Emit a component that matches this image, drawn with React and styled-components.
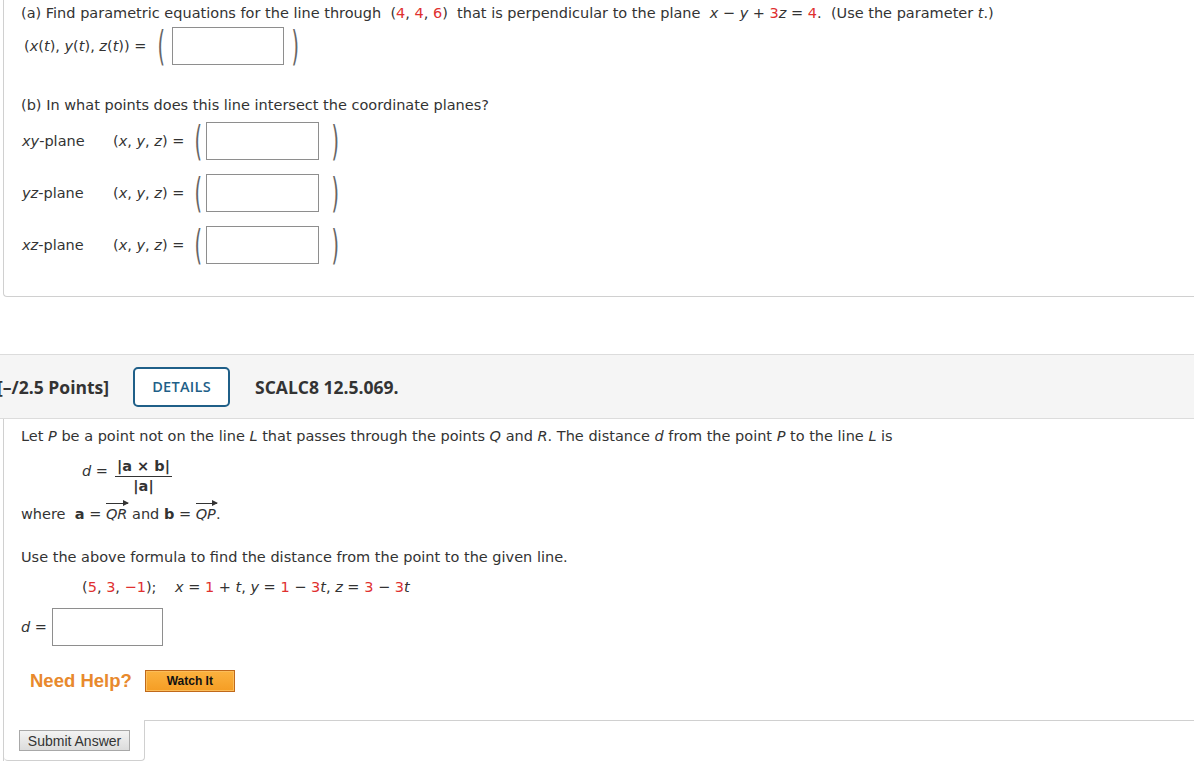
import React from 'react';
import styled, { createGlobalStyle } from 'styled-components';

const GlobalStyle = createGlobalStyle`
  body {
    margin: 0;
    background: #fff;
    font-family: "DejaVu Sans", Verdana, sans-serif;
    color: #333;
  }
`;

const Page = styled.div`
  width: 1194px;
  height: 767px;
  overflow: hidden;
  background: #fff;
`;

const QuestionPanel = styled.div`
  margin-left: 3px;
  border-left: 1px solid #d0d0d0;
  border-bottom: 1px solid #d0d0d0;
  border-bottom-left-radius: 4px;
  padding: 5px 0 32px 17px;
  font-size: 14.5px;
`;

const Text = styled.div`
  line-height: 16px;
  margin-top: ${(p) => p.$mt || 0}px;
  padding-left: ${(p) => p.$pl || 0}px;
  white-space: nowrap;
`;

const Red = styled.span`
  color: #e0302f;
`;

const Var = styled.i`
  font-style: italic;
`;

const Bold = styled.b`
  font-weight: bold;
`;

const AnswerRow = styled.div`
  display: flex;
  align-items: center;
  height: 38px;
  margin-top: ${(p) => p.$mt || 0}px;
  padding-left: ${(p) => p.$pl || 0}px;
`;

const PlaneLabel = styled.span`
  width: 91px;
`;

const Paren = styled.span`
  display: inline-block;
  width: 13px;
  text-align: center;
  font-size: 40px;
  line-height: 38px;
  color: #666;
  font-weight: normal;
  transform: scaleX(0.48);
  margin: 0 ${(p) => p.$mr || 0}px 0 ${(p) => p.$ml || 0}px;
`;

const AnswerBox = styled.div`
  box-sizing: border-box;
  width: ${(p) => p.$w || 112}px;
  height: ${(p) => p.$h || 38}px;
  border: 1px solid #8e8e8e;
  background: #fff;
`;

const Gap = styled.span`
  display: inline-block;
  width: ${(p) => p.$w}px;
`;

const Header = styled.div`
  margin-top: 57px;
  height: 65px;
  box-sizing: border-box;
  background: #f5f5f5;
  border-top: 1px solid #dcdcdc;
  border-bottom: 1px solid #dcdcdc;
  display: flex;
  align-items: center;
  font-family: "Open Sans", sans-serif;
  color: #333;
`;

const Points = styled.span`
  font-size: 17.5px;
  font-weight: 700;
  margin-left: -3px;
`;

const DetailsButton = styled.button`
  margin-left: 24px;
  width: 97px;
  height: 40px;
  box-sizing: border-box;
  border: 2px solid #1f5f88;
  border-radius: 5px;
  background: #fff;
  color: #1f5f88;
  font-family: "Open Sans", sans-serif;
  font-size: 14.5px;
  font-weight: 600;
  letter-spacing: 0.3px;
`;

const Code = styled.span`
  margin-left: 25px;
  font-size: 17.5px;
  font-weight: 700;
`;

const Body = styled.div`
  margin-left: 3px;
  border-left: 1px solid #d0d0d0;
  font-size: 14.5px;
`;

const Content = styled.div`
  padding: 9px 0 29px 17px;
`;

const Formula = styled.div`
  display: flex;
  align-items: flex-start;
  padding-left: 61px;
  margin-top: 14px;
  height: 38px;
`;

const FormulaLhs = styled.span`
  line-height: 16px;
  padding-top: 5px;
`;

const Fraction = styled.span`
  display: inline-flex;
  flex-direction: column;
  align-items: center;
  margin-left: 7px;
  font-weight: bold;
`;

const Numer = styled.span`
  padding: 0 2px 2px;
  border-bottom: 1px solid #333;
  line-height: 16px;
`;

const Denom = styled.span`
  line-height: 18px;
`;

const Vec = styled.span`
  position: relative;
  display: inline-block;
  font-style: italic;
  &::before {
    content: '';
    position: absolute;
    left: 0;
    right: -1px;
    top: -3px;
    border-top: 1px solid #333;
  }
  &::after {
    content: '';
    position: absolute;
    right: -2px;
    top: -6px;
    border-left: 6px solid #333;
    border-top: 3px solid transparent;
    border-bottom: 3px solid transparent;
  }
`;

const HelpRow = styled.div`
  display: flex;
  align-items: center;
  margin-top: 24px;
  padding-left: 9px;
  gap: 13px;
`;

const NeedHelp = styled.span`
  font-family: "Liberation Sans", Arial, sans-serif;
  font-weight: bold;
  font-size: 18.5px;
  color: #e8892d;
`;

const WatchButton = styled.button`
  width: 90px;
  height: 22px;
  box-sizing: border-box;
  padding: 0;
  border: 1px solid #c0691a;
  box-shadow: inset 0 0 0 1px #fbbd5a;
  background: linear-gradient(#fbb23f, #f59d24);
  font-family: "Liberation Sans", Arial, sans-serif;
  font-weight: bold;
  font-size: 12px;
  color: #111;
`;

const Footer = styled.div`
  display: flex;
  height: 40px;
`;

const SubmitTab = styled.div`
  width: 141px;
  box-sizing: border-box;
  border-bottom: 1px solid #d0d0d0;
  border-right: 1px solid #d0d0d0;
  border-bottom-left-radius: 4px;
  border-bottom-right-radius: 4px;
  padding: 9px 0 0 15px;
`;

const FooterRest = styled.div`
  flex: 1;
  border-top: 1px solid #d0d0d0;
  border-left: 1px solid #d0d0d0;
  border-top-left-radius: 4px;
  margin: -1px 0 0 -1px;
  height: 0;
`;

const SubmitButton = styled.button`
  width: 111px;
  height: 21px;
  box-sizing: border-box;
  padding: 0;
  border: 1px solid #a8a8a8;
  background: linear-gradient(#f3f3f3, #dcdcdc);
  font-family: "Liberation Sans", Arial, sans-serif;
  font-size: 14px;
  color: #333;
`;

const planes = ['xy', 'yz', 'xz'];

export default function App() {
  return (
    <Page>
      <GlobalStyle />
      <QuestionPanel>
        <Text>
          (a) Find parametric equations for the line through&nbsp; (<Red>4</Red>, <Red>4</Red>, <Red>6</Red>)&nbsp; that is perpendicular to the plane&nbsp; <Var>x</Var> − <Var>y</Var> + <Red>3</Red><Var>z</Var> = <Red>4</Red>.&nbsp; (Use the parameter <Var>t</Var>.)
        </Text>
        <AnswerRow $mt={6} $pl={3}>
          <span>(<Var>x</Var>(<Var>t</Var>), <Var>y</Var>(<Var>t</Var>), <Var>z</Var>(<Var>t</Var>)) =</span>
          <Paren $ml={8} $mr={5}>(</Paren>
          <AnswerBox $w={112} />
          <Paren $ml={4}>)</Paren>
        </AnswerRow>
        <Text $mt={32}>(b) In what points does this line intersect the coordinate planes?</Text>
        {planes.map((pl, i) => (
          <AnswerRow key={pl} $mt={i === 0 ? 9 : 14} $pl={1}>
            <PlaneLabel><Var>{pl}</Var>-plane</PlaneLabel>
            <span>(<Var>x</Var>, <Var>y</Var>, <Var>z</Var>) =</span>
            <Paren $ml={7} $mr={2}>(</Paren>
            <AnswerBox $w={113} />
            <Paren $ml={9}>)</Paren>
          </AnswerRow>
        ))}
      </QuestionPanel>

      <Header>
        <Points>[–/2.5 Points]</Points>
        <DetailsButton>DETAILS</DetailsButton>
        <Code>SCALC8 12.5.069.</Code>
      </Header>

      <Body>
        <Content>
          <Text>
            Let <Var>P</Var> be a point not on the line <Var>L</Var> that passes through the points <Var>Q</Var> and <Var>R</Var>. The distance <Var>d</Var> from the point <Var>P</Var> to the line <Var>L</Var> is
          </Text>
          <Formula>
            <FormulaLhs><Var>d</Var> =</FormulaLhs>
            <Fraction>
              <Numer>|a × b|</Numer>
              <Denom>|a|</Denom>
            </Fraction>
          </Formula>
          <Text $mt={10}>
            where&nbsp; <Bold>a</Bold> = <Vec>QR</Vec> and <Bold>b</Bold> = <Vec>QP</Vec>.
          </Text>
          <Text $mt={27}>Use the above formula to find the distance from the point to the given line.</Text>
          <Text $mt={14} $pl={61}>
            (<Red>5</Red>, <Red>3</Red>, <Red>−1</Red>);&nbsp;&nbsp;&nbsp; <Var>x</Var> = <Red>1</Red> + <Var>t</Var>, <Var>y</Var> = <Red>1</Red> − <Red>3</Red><Var>t</Var>, <Var>z</Var> = <Red>3</Red> − <Red>3</Red><Var>t</Var>
          </Text>
          <AnswerRow $mt={13}>
            <span><Var>d</Var> =</span>
            <Gap $w={5} />
            <AnswerBox $w={111} $h={38} />
          </AnswerRow>
          <HelpRow>
            <NeedHelp>Need Help?</NeedHelp>
            <WatchButton>Watch It</WatchButton>
          </HelpRow>
        </Content>
        <Footer>
          <SubmitTab>
            <SubmitButton>Submit Answer</SubmitButton>
          </SubmitTab>
          <FooterRest />
        </Footer>
      </Body>
    </Page>
  );
}
